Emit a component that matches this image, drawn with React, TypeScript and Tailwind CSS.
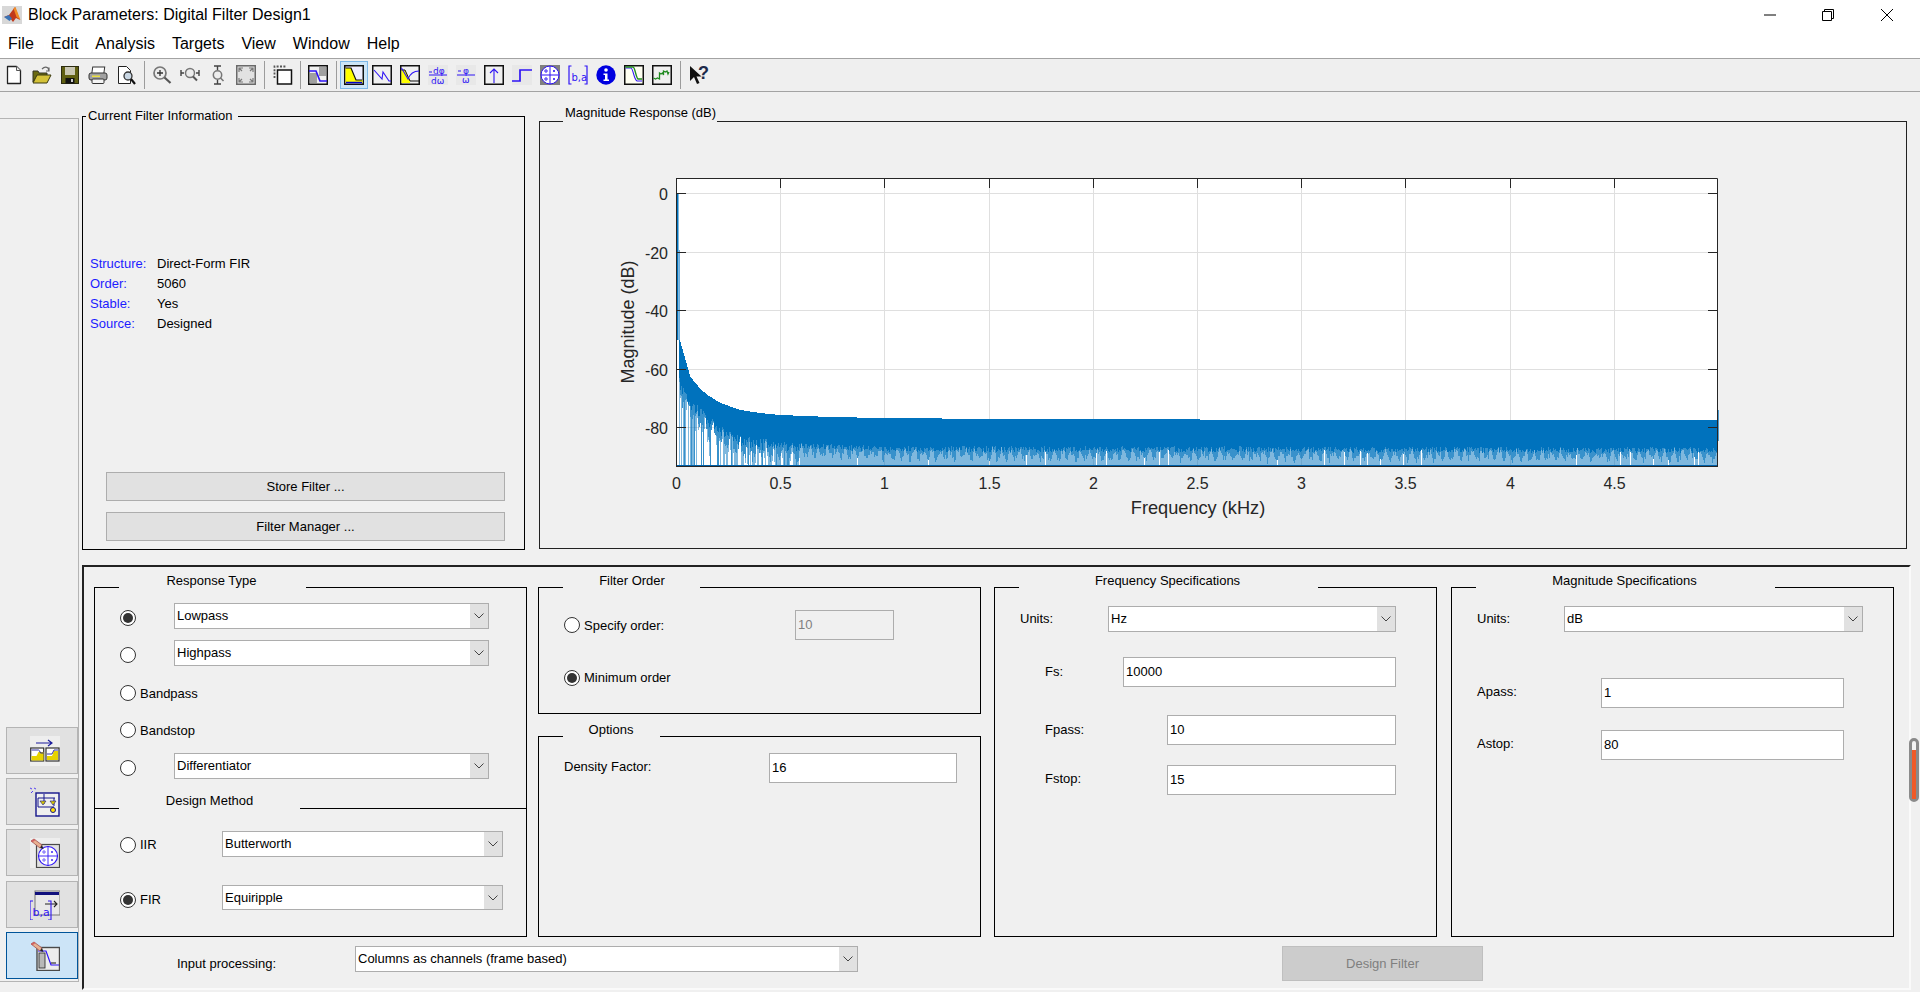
import React from "react";

const FONT = "font-['Liberation_Sans',Arial,sans-serif]";

/* ---------- seeded noise for the response trace ---------- */
function rng(seed: number) {
  let s = seed;
  return () => {
    s = (s * 16807) % 2147483647;
    return (s - 1) / 2147483646;
  };
}
function lerp(pts: number[][], x: number) {
  if (x <= pts[0][0]) return pts[0][1];
  for (let i = 1; i < pts.length; i++) {
    if (x <= pts[i][0]) {
      const [a, b] = pts[i - 1];
      const [c, d] = pts[i];
      return b + ((d - b) * (x - a)) / (c - a);
    }
  }
  return pts[pts.length - 1][1];
}
const TOP = [[679, 335], [680, 342], [685, 360], [690, 377], [700, 389], [707, 395], [720, 403], [740, 410], [760, 413], [780, 415], [830, 417], [884, 418], [1000, 419], [1200, 419.5], [1718, 420]];
const BOT = [[679, 378], [690, 398], [700, 408], [720, 426], [740, 435], [780, 441], [830, 444], [884, 446], [1718, 447]];

function buildTrace() {
  const r = rng(4711);
  let solid = "", mid = "", light = "";
  for (let x = 679; x < 1718; x++) {
    const px = x + 0.5;
    const t = Math.round(lerp(TOP, x));
    const left = x < 800;
    const depth = lerp(BOT, x) + r() * (left ? 12 : 6);
    solid += `M${px} ${t}V${depth.toFixed(0)}`;
    const phase = Math.sin(x * 0.72) * 0.5 + 0.5;
    const m = depth + phase * (left ? 12 : 8) + r() * 4;
    mid += `M${px} ${depth.toFixed(0)}V${Math.min(m, 465).toFixed(0)}`;
    const gap = left ? (x < 730 ? 0.42 : 0.18) : 0.03;
    if (r() > gap) {
      light += `M${px} ${Math.min(m, 465).toFixed(0)}V${left && r() < 0.5 ? Math.min(m + r() * 18, 466).toFixed(0) : "466"}`;
    } else if (left && r() < 0.4) {
      mid += `M${px} ${Math.min(m, 465).toFixed(0)}V466`;
    }
  }
  return { solid, mid, light };
}
const TRACE = buildTrace();

function Chart() {
  const xt = [0, 0.5, 1, 1.5, 2, 2.5, 3, 3.5, 4, 4.5];
  const yt = [0, -20, -40, -60, -80];
  const X = (k: number) => Math.round(676 + k * 208.4) + 0.5;
  const Y = (d: number) => Math.round(193 - (d * 58.5) / 20) + 0.5;
  return (
    <svg width={1366} height={426} viewBox="540 122 1366 426" className="block">
      <rect x={676} y={178} width={1042} height={288} fill="#fff" />
      {xt.slice(1).map((k) => (
        <line key={k} x1={X(k)} x2={X(k)} y1={178} y2={466} stroke="#dfdfdf" />
      ))}
      {yt.map((d) => (
        <line key={d} x1={676} x2={1718} y1={Y(d)} y2={Y(d)} stroke="#dfdfdf" />
      ))}
      <g fill="none" strokeWidth={1} shapeRendering="crispEdges">
        <path d={TRACE.light} stroke="#0072bd" strokeOpacity={0.5} />
        <path d={TRACE.mid} stroke="#0072bd" strokeOpacity={0.78} />
        <path d={TRACE.solid} stroke="#0072bd" />
      </g>
      <path d="M677.5 193 V340" stroke="#0072bd" strokeWidth={2} />
      <path d="M679.5 250 V340" stroke="#6eaede" strokeWidth={1} />
      <path d="M1718.5 410 V441" stroke="#4c9cd2" strokeWidth={1} />
      <path d="M676 465.5 H1718" stroke="#0060a8" strokeWidth={1} />
      <g stroke="#262626" strokeWidth={1} fill="none">
        <path d="M676.5 178.5 H1717.5 V466 M676.5 178 V466 M676 466.5 H1718" />
        {xt.slice(1).map((k) => (
          <path key={k} d={`M${X(k)} 178 v10`} />
        ))}
        {yt.map((d) => (
          <path key={d} d={`M676 ${Y(d)} h10 M1718 ${Y(d)} h-10`} />
        ))}
      </g>
      <g fill="#262626" fontFamily="'Liberation Sans',Arial,sans-serif" fontSize={16}>
        {xt.map((k) => (
          <text key={k} x={X(k)} y={489} textAnchor="middle">
            {k}
          </text>
        ))}
        {yt.map((d) => (
          <text key={d} x={668} y={Y(d) + 6} textAnchor="end">
            {d}
          </text>
        ))}
        <text x={1198} y={514} textAnchor="middle" fontSize={18.2}>
          Frequency (kHz)
        </text>
        <text transform="translate(634 322) rotate(-90)" textAnchor="middle" fontSize={18}>
          Magnitude (dB)
        </text>
      </g>
    </svg>
  );
}

/* ---------- toolbar icons (20x20) ---------- */
const I = ({ children }: { children: React.ReactNode }) => (
  <svg width={20} height={20} viewBox="0 0 20 20" className="block">
    {children}
  </svg>
);
const B = "#2f14f5";
const Frame = ({ fill = "#f0f0f0" }: { fill?: string }) => (
  <rect x={0.75} y={0.75} width={18.5} height={18.5} fill={fill} stroke="#111" strokeWidth={1.5} />
);
const icons: React.ReactNode[] = [
  <I><path d="M3.5 1.5h9l4 4v13h-13z" fill="#fff" stroke="#222" strokeWidth={1.3} strokeLinejoin="round" /><path d="M12.5 1.5v4h4" fill="#eee" stroke="#555" /></I>,
  <I><path d="M1 17V6h5l1 2h8v3H5z" fill="#6a6a10" stroke="#332" /><path d="M1 18l4-8h14l-4 8z" fill="#d4c238" stroke="#3a3a10" /><path d="M10 4q3-3 6-1l1 3M17 2.5v3.5h-3" fill="none" stroke="#666" strokeWidth={1.2} /></I>,
  <I><rect x={1.5} y={1.5} width={17} height={17} fill="#5f5f12" stroke="#2b2b10" /><rect x={5} y={2} width={10} height={8} fill="#c9c7b4" /><rect x={5.5} y={13} width={9} height={5.5} fill="#111" /><rect x={11} y={14} width={2} height={3} fill="#ccc" /></I>,
  <I><rect x={5} y={2} width={12} height={8} fill="#fff" stroke="#333" transform="skewX(-8)" /><rect x={1} y={8} width={18} height={7} rx={2} fill="#a0a0a0" stroke="#333" /><rect x={4} y={10.5} width={8} height={1.5} fill="#ece040" /><rect x={4} y={14} width={12} height={4.5} rx={1} fill="#f4f4f4" stroke="#333" /></I>,
  <I><path d="M2.5 1.5h8l4 4v13h-12z" fill="#fff" stroke="#222" /><circle cx={12} cy={11} r={4} fill="#c9d7e4" stroke="#333" strokeWidth={1.3} /><path d="M15 14l4 5" stroke="#111" strokeWidth={2.2} /></I>,
  <I><circle cx={8} cy={8} r={6} fill="#ededed" stroke="#777" strokeWidth={1.7} /><path d="M5 8h6M8 5v6" stroke="#333" strokeWidth={1.3} /><path d="M12.5 12.5l6 5.5" stroke="#555" strokeWidth={2.2} /></I>,
  <I><circle cx={10} cy={8} r={4.5} fill="#ededed" stroke="#777" strokeWidth={1.5} /><path d="M1 5v6M1 8h3M19 5v6M16 8h3" stroke="#444" strokeWidth={1.4} /><path d="M13 11.5l4 4" stroke="#555" strokeWidth={2} /></I>,
  <I><circle cx={9.5} cy={10} r={4.2} fill="#ededed" stroke="#777" strokeWidth={1.5} /><path d="M6 1h7M9.5 1v4M6 19h7M9.5 19v-4" stroke="#444" strokeWidth={1.4} /><path d="M12.5 13l3 3" stroke="#777" strokeWidth={1.6} /></I>,
  <I><rect x={0.75} y={0.75} width={18.5} height={18.5} fill="#e2e2e2" stroke="#6a6a6a" strokeWidth={1.5} /><path d="M3 7V3h4M17 7V3h-4M3 13v4h4M17 13v4h-4M3 3l3 3M17 3l-3 3M3 17l3-3M17 17l-3-3" fill="none" stroke="#7a7a7a" strokeWidth={1.2} /></I>,
  <I><path d="M1.5 13V1.5H13" fill="none" stroke="#555" strokeWidth={1.8} strokeDasharray="2 1.4" /><rect x={4.5} y={5} width={14} height={14} fill="#fff" stroke="#111" strokeWidth={1.5} /></I>,
  <I><Frame /><rect x={2} y={8} width={7} height={10} fill="#a0a0a0" /><rect x={11} y={2} width={7} height={9} fill="#a0a0a0" /><path d="M1 6h7l4 10h7" fill="none" stroke={B} strokeWidth={1.7} /></I>,
  <I><Frame fill="#eef" /><path d="M1.5 3H7l5 12 H18.5V18H1.5z" fill="#ffff00" /><path d="M1.5 3H7l5 12h6" fill="none" stroke="#111" strokeWidth={1.2} /><path d="M2 17.5h16" stroke="#0000c8" strokeWidth={1.5} /></I>,
  <I><Frame /><path d="M2 5l8 9 1-7 6 9h2" fill="none" stroke={B} strokeWidth={1.1} /></I>,
  <I><Frame /><path d="M1.5 5H5l5 10v3H1.5z" fill="#ffff00" /><path d="M1.5 5H5l5 11h9" fill="none" stroke="#111" /><path d="M1.5 3L8 14c2-5 5-8 11-8" fill="none" stroke={B} strokeWidth={1.1} /></I>,
  <I><rect width={20} height={20} fill="#e8e8e8" /><path d="M1 7h3M1 10h18" stroke={B} /><text x={5} y={8.5} fontSize={9} fill={B} fontFamily="'DejaVu Sans',sans-serif">dφ</text><text x={3} y={18.5} fontSize={9} fill={B} fontFamily="'DejaVu Sans',sans-serif">dω</text></I>,
  <I><rect width={20} height={20} fill="#e8e8e8" /><path d="M2 6h3M1 10h18" stroke={B} /><text x={7} y={8.5} fontSize={9} fill={B} fontFamily="'DejaVu Sans',sans-serif">φ</text><text x={6} y={18} fontSize={9} fill={B} fontFamily="'DejaVu Sans',sans-serif">ω</text></I>,
  <I><Frame /><path d="M10 18V4M6 8l4-4 4 4" fill="none" stroke={B} strokeWidth={1.1} /></I>,
  <I><rect width={20} height={20} fill="#e8e8e8" /><path d="M0 16h8V5h12" fill="none" stroke={B} strokeWidth={1.7} /></I>,
  <I><rect width={20} height={20} fill="#808080" /><circle cx={10} cy={10} r={9} fill="#fff" stroke={B} /><path d="M1 10h18M10 1v18" stroke={B} /><circle cx={6} cy={6} r={1.2} fill="none" stroke={B} /><circle cx={6} cy={14} r={1.2} fill="none" stroke={B} /><path d="M13 5l2 2m0-2l-2 2M13 13l2 2m0-2l-2 2" stroke={B} strokeWidth={0.8} /></I>,
  <I><path d="M3.5 1H1v18h2.500M16.5 1H19v18h-2.500" fill="none" stroke={B} strokeWidth={1.2} /><text x={3.500} y={16} fontSize={10} fill={B} fontFamily="'DejaVu Sans',sans-serif">b,a</text></I>,
  <I><circle cx={10} cy={10} r={9.700} fill="#0000e0" /><circle cx={10} cy={5} r={1.800} fill="#fff" /><path d="M7.500 8.500H11.500V14.500H13V16H7.500V14.500H9V10H7.500z" fill="#fff" /></I>,
  <I><Frame fill="#fffff2" /><path d="M1.500 3H7c2 0 3 12 6 13h5" fill="none" stroke={B} strokeWidth={1.100} /><path d="M1.500 2H9c2 0 3 11 5 12h4" fill="none" stroke="#1f8a1f" strokeWidth={1.400} /></I>,
  <I><Frame /><path d="M1.500 13l2 1 2-1 2 1V8l1.500 1 1.500-1 1 2V6l2 1 1.500-1 1 3 1-2" fill="none" stroke="#1f8a1f" strokeWidth={1.300} /></I>,
];

function Toolbar() {
  const Sep = ({ w }: { w: string }) => (
    <div className={`flex h-[32px] items-center justify-center ${w}`}>
      <div className="h-[28px] w-px bg-[#9c9c9c]" />
    </div>
  );
  const Cell = ({ i }: { i: number }) => (
    <div className="flex h-[32px] w-[28px] items-center justify-center">{icons[i]}</div>
  );
  return (
    <div className="flex h-[33px] items-center border-b border-[#a3a3a3] bg-[#efefef]">
      {[0, 1, 2, 3, 4].map((i) => <Cell key={i} i={i} />)}
      <Sep w="w-[8px]" />
      {[5, 6, 7, 8].map((i) => <Cell key={i} i={i} />)}
      <Sep w="w-[9px]" />
      <Cell i={9} />
      <Sep w="w-[7px]" />
      <Cell i={10} />
      <Sep w="w-[8px]" />
      <div className="flex h-[28px] w-[28px] items-center justify-center border border-[#7db7e8] bg-[#cce4f7]">{icons[11]}</div>
      {[12, 13, 14, 15, 16, 17, 18, 19, 20, 21, 22].map((i) => <Cell key={i} i={i} />)}
      <Sep w="w-[8px]" />
      <div className="flex h-[32px] w-[28px] items-center justify-center">
        <svg width={24} height={22} viewBox="0 0 24 22" className="block">
          <path d="M4 2l0 15 4-4 3 7 2.500-1-3-6.500 5 0z" fill="#111" />
          <text x={12} y={15} fontSize={18} fontWeight={700} fill="#1c2a4a" fontFamily="'Liberation Sans',sans-serif">?</text>
        </svg>
      </div>
    </div>
  );
}

/* ---------- sidebar tab icons (30x30) ---------- */
const SideBox = ({ x, y, s, fill = "#efefef" }: { x: number; y: number; s: number; fill?: string }) => (
  <rect x={x} y={y} width={s} height={s} fill={fill} stroke="#4a4a4a" strokeWidth={1.200} />
);
const Pencil = () => (
  <g>
    <path d="M1 3l3-2 8 6-2 3z" fill="#e8b090" stroke="#a05050" strokeWidth={0.8} />
    <path d="M1 3l3-2 1.500 1-3 2.200z" fill="#d06060" />
    <path d="M10 10l2-3 1.500 4z" fill="#222" />
  </g>
);
const sideIcons: React.ReactNode[] = [
  <svg width={30} height={30} viewBox="0 0 30 30" className="block">
    <rect width={30} height={30} fill="#eeeeee" />
    <path d="M6 7h15M18 4l4 3-4 3" fill="none" stroke="#1b1b9c" strokeWidth={1.200} />
    <rect x={0.700} y={12} width={13} height={13} fill="#fff" stroke="#333" strokeWidth={1.200} />
    <path d="M1.500 20h5l2-4h5v8.500h-12z" fill="#e6d200" />
    <path d="M1.500 14h7q1 0 2 3h3" fill="none" stroke="#1b1b9c" strokeWidth={0.9} />
    <rect x={16} y={12} width={13} height={13} fill="#fff" stroke="#333" strokeWidth={1.200} />
    <path d="M17 24v-4h5l2-5h4v9z" fill="#e6d200" />
    <path d="M17 18h5l2-4h4" fill="none" stroke="#1b1b9c" strokeWidth={0.9} />
  </svg>,
  <svg width={30} height={30} viewBox="0 0 30 30" className="block">
    <rect x={6} y={6} width={23} height={23} fill="#efefef" stroke="#14148c" strokeWidth={1.400} />
    <path d="M0 1l2 1m2-1l2 1M1 6l2-2" stroke={B} strokeWidth={0.8} />
    <path d="M8 11h17M8 11v9h16M14 7v10M24 11v8" fill="none" stroke="#14148c" strokeWidth={1} />
    <path d="M10 14l3 4 3-4zM20 14l3 4 3-4z" fill="#d8c800" stroke="#14148c" strokeWidth={0.6} />
    <circle cx={23} cy={23} r={2.500} fill="#ffe000" stroke="#14148c" />
  </svg>,
  <svg width={30} height={30} viewBox="0 0 30 30" className="block">
    <rect width={30} height={30} fill="#eeeeee" />
    <SideBox x={6.500} y={6.500} s={23} fill="#e2e2e2" />
    <circle cx={18} cy={18} r={9.500} fill="#fff" stroke={B} strokeWidth={1.100} />
    <path d="M8.500 18h19M18 8.500v19" stroke={B} strokeWidth={0.9} />
    <circle cx={14} cy={14} r={1.200} fill="none" stroke={B} strokeWidth={0.7} />
    <circle cx={14} cy={22} r={1.200} fill="none" stroke={B} strokeWidth={0.7} />
    <path d="M21 13l2 2m0-2l-2 2M21 21l2 2m0-2l-2 2" stroke={B} strokeWidth={0.7} />
    <Pencil />
  </svg>,
  <svg width={30} height={30} viewBox="0 0 30 30" className="block">
    <rect x={5} y={1} width={25} height={24} fill="#e8e8e8" stroke="#777" />
    <rect x={5} y={2} width={24} height={3} fill="#10107c" />
    <path d="M15 14h12M24 11l3 3-3 3" fill="none" stroke="#222" strokeWidth={1.100} />
    <path d="M3 11H0v19h3M18 11h3v19h-3" fill="none" stroke={B} strokeWidth={1.100} />
    <text x={2.500} y={26} fontSize={11} fill={B} fontFamily="'DejaVu Sans',sans-serif">b,a</text>
  </svg>,
  <svg width={30} height={30} viewBox="0 0 30 30" className="block">
    <rect x={7} y={6.500} width={22.500} height={23} fill="#ededed" stroke="#4a4a4a" strokeWidth={1.400} />
    <rect x={9} y={12} width={6} height={15} fill="#b8b8b8" stroke="#333" strokeWidth={0.9} />
    <path d="M8 10h8l5 14h8" fill="none" stroke={B} strokeWidth={1.200} />
    <path d="M21 22h5" stroke="#333" strokeWidth={1.200} />
    <Pencil />
  </svg>,
];

function Radio({ on = false }: { on?: boolean }) {
  return (
    <div className="flex h-[16px] w-[16px] shrink-0 items-center justify-center rounded-full border border-[#333] bg-white">
      {on && <div className="h-[10px] w-[10px] rounded-full bg-[#333]" />}
    </div>
  );
}

const Select = ({ value, w, h = "h-[26px]" }: { value: string; w: string; h?: string }) => (
  <div className={`flex shrink-0 border border-[#adadad] bg-white ${h} ${w}`}>
    <div className="flex-1 pl-[2px] text-[13px] leading-[23px] text-black">{value}</div>
    <div className="flex w-[18px] items-center justify-center bg-[#e1e1e1]">
      <svg width={10} height={6} viewBox="0 0 10 6">
        <path d="M0.500 0.500L5 5 9.500 0.500" fill="none" stroke="#444" strokeWidth={1} />
      </svg>
    </div>
  </div>
);

const Input = ({ value, w, disabled = false }: { value: string; w: string; disabled?: boolean }) => (
  <div
    className={`h-[30px] shrink-0 border border-[#adadad] pl-[2px] text-[13px] leading-[28px] ${w} ${
      disabled ? "bg-[#f0f0f0] text-[#808080]" : "bg-white text-black"
    }`}
  >
    {value}
  </div>
);

const Legend = ({ text, cls, tcls }: { text: string; cls: string; tcls: string }) => (
  <div className={`absolute flex h-[17px] items-center bg-[#f0f0f0] text-[13px] leading-none text-black ${cls} ${tcls}`}>
    {text}
  </div>
);

const Tab = ({ i, on = false, cls }: { i: number; on?: boolean; cls?: string }) => (
  <div
    className={`flex h-[47px] w-[72px] items-center justify-center border pl-[5px] ${
      on ? "border-[#005499] bg-[#cce4f7]" : "border-[#b4b4b4] bg-[#e1e1e1]"
    } ${cls ?? ""}`}
  >
    {sideIcons[i]}
  </div>
);

const InfoRow = ({ k, v }: { k: string; v: string }) => (
  <div className="flex h-[20px] items-center text-[13px]">
    <div className="w-[67px] text-[#1c1cff]">{k}</div>
    <div className="text-black">{v}</div>
  </div>
);

const BigBtn = ({ label }: { label: string }) => (
  <div className="flex h-[29px] w-[399px] items-center justify-center border border-[#adadad] bg-[#e1e1e1] text-[13px] text-black">
    {label}
  </div>
);

export default function App() {
  return (
    <div className={`relative flex h-[992px] w-[1920px] flex-col overflow-hidden bg-[#f0f0f0] ${FONT}`}>
      {/* title + menu */}
      <div className="h-[59px] border-b border-[#a3a3a3] bg-white">
        <div className="flex h-[29px] items-center">
          <svg width={20} height={18} viewBox="0 0 20 18" className="ml-[2px] block">
            <rect width={20} height={18} fill="#d8d8d8" />
            <path d="M2 11l5-2 3-4 3-4 5 13-4-2-3 4-3-4z" fill="#c0391b" />
            <path d="M11.500 2.500l2-1.500 5 13-4-3z" fill="#f08a24" />
            <path d="M2 11l5-2 3 3.500-2.500 2.500z" fill="#3d74b5" />
          </svg>
          <span className="ml-[6px] text-[16px] text-black">Block Parameters: Digital Filter Design1</span>
          <div className="ml-auto flex pr-[3px]">
            <div className="flex h-[29px] w-[58px] items-center justify-center">
              <svg width={12} height={2} viewBox="0 0 12 2"><path d="M0 1h12" stroke="#000" /></svg>
            </div>
            <div className="flex h-[29px] w-[58px] items-center justify-center">
              <svg width={12} height={12} viewBox="0 0 12 12">
                <path d="M0.500 2.500h9v9h-9zM2.500 2.500v-2h9v9h-2" fill="none" stroke="#000" />
              </svg>
            </div>
            <div className="flex h-[29px] w-[60px] items-center justify-center">
              <svg width={12} height={12} viewBox="0 0 12 12"><path d="M0 0l12 12M12 0L0 12" stroke="#000" /></svg>
            </div>
          </div>
        </div>
        <div className="flex h-[29px] items-center gap-[17px] pl-[8px] text-[16px] text-black">
          {["File", "Edit", "Analysis", "Targets", "View", "Window", "Help"].map((m) => (
            <span key={m}>{m}</span>
          ))}
        </div>
      </div>

      <Toolbar />

      {/* main */}
      <div className="flex flex-1">
        {/* sidebar */}
        <div className="mt-[26px] flex h-[864px] w-[79px] shrink-0 flex-col justify-end gap-[4px] border-t border-r border-b border-[#b4b4b4] pb-[2px] pl-[6px]">
          <Tab i={0} />
          <Tab i={1} />
          <Tab i={2} />
          <Tab i={3} cls="mt-[1px]" />
          <Tab i={4} on />
        </div>

        <div className="ml-[3px] flex min-w-0 flex-1 flex-col">
          {/* upper row */}
          <div className="mt-[24px] flex items-start">
            <div className="relative h-[434px] w-[443px] shrink-0 border border-black">
              <Legend text="Current Filter Information" cls="-top-[10px] left-[3px]" tcls="pr-[5px] pl-[2px]" />
              <div className="mt-[137px] pl-[7px]">
                <InfoRow k="Structure:" v="Direct-Form FIR" />
                <InfoRow k="Order:" v="5060" />
                <InfoRow k="Stable:" v="Yes" />
                <InfoRow k="Source:" v="Designed" />
              </div>
              <div className="mt-[138px] flex flex-col gap-[11px] pl-[23px]">
                <BigBtn label="Store Filter ..." />
                <BigBtn label="Filter Manager ..." />
              </div>
            </div>
            <div className="relative mt-[5px] ml-[14px] h-[428px] w-[1368px] shrink-0 border border-[#222]">
              <Legend text="Magnitude Response (dB)" cls="-top-[18px] left-[23px] h-[19px]" tcls="pl-[2px] pr-[1px] pb-[2px]" />
              <Chart />
            </div>
          </div>

          {/* lower panel */}
          <div className="mt-[15px] h-[425px] w-[1829px] border-t-2 border-r-2 border-b-2 border-l-2 border-t-[#222] border-r-[#fafafa] border-b-[#fafafa] border-l-[#222] pt-[20px] pl-[10px]">
            <div className="flex h-[350px] items-stretch">
              {/* response type + design method */}
              <div className="relative w-[433px] shrink-0 border border-black">
                <Legend text="Response Type" cls="-top-[16px] left-[24px] w-[187px]" tcls="justify-center pr-[2px]" />
                <div className="h-[220px] pl-[25px]">
                  <div className="flex pt-[15px]">
                    <div className="w-[54px] pt-[7px]"><Radio on /></div>
                    <Select value="Lowpass" w="w-[315px]" />
                  </div>
                  <div className="flex pt-[11px]">
                    <div className="w-[54px] pt-[7px]"><Radio /></div>
                    <Select value="Highpass" w="w-[315px]" />
                  </div>
                  <div className="mt-[19px] flex h-[16px] items-center gap-[4px] text-[13px] text-black">
                    <Radio /> <span className="pt-[1px]">Bandpass</span>
                  </div>
                  <div className="mt-[21px] flex h-[16px] items-center gap-[4px] text-[13px] text-black">
                    <Radio /> <span className="pt-[1px]">Bandstop</span>
                  </div>
                  <div className="flex pt-[15px]">
                    <div className="w-[54px] pt-[7px]"><Radio /></div>
                    <Select value="Differentiator" w="w-[315px]" />
                  </div>
                </div>
                <div className="relative border-t border-black pl-[25px]">
                  <Legend text="Design Method" cls="-top-[17px] left-[24px] w-[181px]" tcls="justify-center" />
                  <div className="flex pt-[22px]">
                    <div className="flex w-[102px] items-center gap-[4px] pt-[2px] text-[13px] text-black">
                      <Radio /> IIR
                    </div>
                    <Select value="Butterworth" w="w-[281px]" />
                  </div>
                  <div className="flex pt-[27px]">
                    <div className="flex w-[102px] items-center gap-[4px] pt-[5px] text-[13px] text-black">
                      <Radio on /> FIR
                    </div>
                    <Select value="Equiripple" w="w-[281px]" h="mt-[1px] h-[25px]" />
                  </div>
                </div>
              </div>

              {/* filter order + options */}
              <div className="ml-[11px] flex w-[443px] shrink-0 flex-col gap-[22px]">
                <div className="relative h-[127px] border border-black pl-[25px]">
                  <Legend text="Filter Order" cls="-top-[16px] left-[24px] w-[137px]" tcls="justify-center pl-[1px]" />
                  <div className="mt-[22px] flex h-[30px] items-center text-[13px] text-black">
                    <div className="flex w-[231px] items-center gap-[4px]"><Radio /> <span className="pt-[1px]">Specify order:</span></div>
                    <Input value="10" w="w-[99px]" disabled />
                  </div>
                  <div className="mt-[30px] flex h-[16px] items-center gap-[4px] text-[13px] text-black">
                    <Radio on /> Minimum order
                  </div>
                </div>
                <div className="relative flex-1 border border-black pl-[25px]">
                  <Legend text="Options" cls="-top-[16px] left-[24px] w-[97px]" tcls="justify-center pr-[1px]" />
                  <div className="mt-[16px] flex h-[30px] items-center text-[13px] text-black">
                    <div className="w-[205px] pb-[3px]">Density Factor:</div>
                    <Input value="16" w="w-[188px]" />
                  </div>
                </div>
              </div>

              {/* frequency */}
              <div className="relative ml-[13px] w-[443px] shrink-0 border border-black pl-[25px]">
                <Legend text="Frequency Specifications" cls="-top-[16px] left-[24px] w-[299px]" tcls="justify-center pr-[2px]" />
                <div className="mt-[18px] flex h-[26px] items-center text-[13px] text-black">
                  <div className="w-[88px]">Units:</div>
                  <Select value="Hz" w="w-[288px]" h="-mt-[1px] h-[26px]" />
                </div>
                <div className="mt-[25px] flex h-[30px] items-center pl-[25px] text-[13px] text-black">
                  <div className="w-[78px]">Fs:</div>
                  <Input value="10000" w="w-[273px]" />
                </div>
                <div className="mt-[28px] flex h-[30px] items-center pl-[25px] text-[13px] text-black">
                  <div className="w-[122px]">Fpass:</div>
                  <Input value="10" w="w-[229px]" />
                </div>
                <div className="mt-[20px] flex h-[30px] items-center pl-[25px] text-[13px] text-black">
                  <div className="w-[122px] pb-[2px]">Fstop:</div>
                  <Input value="15" w="w-[229px]" />
                </div>
              </div>

              {/* magnitude */}
              <div className="relative ml-[14px] w-[443px] shrink-0 border border-black pl-[25px]">
                <Legend text="Magnitude Specifications" cls="-top-[16px] left-[24px] w-[299px]" tcls="justify-center pr-[2px]" />
                <div className="mt-[18px] flex h-[26px] items-center text-[13px] text-black">
                  <div className="w-[87px]">Units:</div>
                  <Select value="dB" w="w-[299px]" h="-mt-[1px] h-[26px]" />
                </div>
                <div className="mt-[46px] flex h-[30px] items-center text-[13px] text-black">
                  <div className="w-[124px] pb-[2px]">Apass:</div>
                  <Input value="1" w="w-[243px]" />
                </div>
                <div className="mt-[22px] flex h-[30px] items-center text-[13px] text-black">
                  <div className="w-[124px] pb-[2px]">Astop:</div>
                  <Input value="80" w="w-[243px]" />
                </div>
              </div>
            </div>

            {/* bottom row */}
            <div className="mt-[9px] flex items-start">
              <div className="ml-[83px] w-[178px] pt-[8px] text-[13px] text-black">Input processing:</div>
              <Select value="Columns as channels (frame based)" w="w-[503px]" />
              <div className="ml-[424px] flex h-[35px] w-[201px] items-center justify-center border border-[#bfbfbf] bg-[#cccccc] pt-[1px] text-[13px] text-[#7f7f7f]">
                Design Filter
              </div>
            </div>
          </div>
        </div>
      </div>

      {/* window-edge indicator lying over the panel */}
      <div className="absolute top-[738px] left-[1909px] flex h-[64px] w-[10px] justify-center rounded-full border-[3px] border-[#8a8a8a] bg-[#f4f4f4] pt-[9px]">
        <div className="h-[49px] w-[4px] bg-[#f05a28]" />
      </div>
    </div>
  );
}
